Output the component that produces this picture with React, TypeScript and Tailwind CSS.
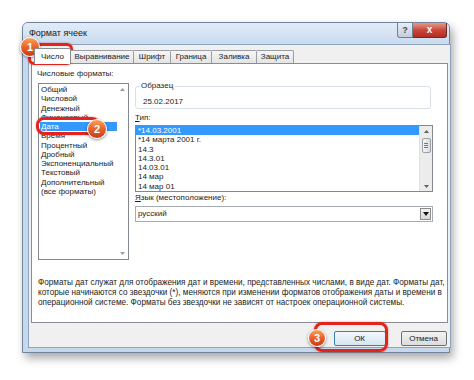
import React from "react";

const formats = [
  "Общий",
  "Числовой",
  "Денежный",
  "Финансовый",
  "Дата",
  "Время",
  "Процентный",
  "Дробный",
  "Экспоненциальный",
  "Текстовый",
  "Дополнительный",
  "(все форматы)",
];

const types = [
  "*14.03.2001",
  "*14 марта 2001 г.",
  "14.3",
  "14.3.01",
  "14.03.01",
  "14 мар",
  "14 мар 01",
];

const tabs = [
  { label: "Выравнивание", w: "w-[63px]" },
  { label: "Шрифт", w: "w-[37px]" },
  { label: "Граница", w: "w-[41px]" },
  { label: "Заливка", w: "w-[45px]" },
  { label: "Защита", w: "w-[37px]" },
];

function Badge({ n, className }: { n: string; className: string }) {
  return (
    <div
      className={
        "absolute rounded-full border-[1.5px] border-white bg-gradient-to-b from-[#f8a25a] via-[#e8622a] to-[#c93a16] shadow-[0_1px_3px_rgba(0,0,0,0.45)] flex items-center justify-center text-white font-bold text-[11px] leading-none " +
        className
      }
    >
      {n}
    </div>
  );
}

function Highlight({ className }: { className: string }) {
  return (
    <div
      className={
        "absolute border-[3px] border-[#e3231c] shadow-[0_0_2px_rgba(200,0,0,0.5)] " +
        className
      }
    />
  );
}

export default function App() {
  return (
    <div className="relative w-[474px] h-[380px] bg-white overflow-hidden font-['Liberation_Sans',Arial,sans-serif] text-[8px] text-[#1b1b1b]">
      <div className="pl-[22px] pt-[22px]">
        {/* Window */}
        <div className="w-[428px] h-[331px] flex flex-col border border-[#72849b] rounded-t-[6px] bg-[#c6d8ec] shadow-[3px_5px_10px_rgba(0,0,0,0.35)]">
          {/* Title bar */}
          <div className="h-[21px] flex items-start justify-between rounded-t-[5px] bg-gradient-to-b from-[#e2ecf7] to-[#c9dbef]">
            <div className="pl-[6px] pt-[5px] text-[9px] leading-[10px] text-[#1a1a1a]">Формат ячеек</div>
            <div className="flex pr-[2px]">
              <div className="w-[16px] h-[15px] border border-[#6f7f94] border-t-0 rounded-bl-[3px] bg-gradient-to-b from-[#e8eef6] to-[#c2cfdf] flex items-center justify-center text-[9px] font-bold text-[#3e4a5a] leading-none">
                ?
              </div>
              <div className="w-[34px] h-[15px] border border-[#6c2a2a] border-t-0 border-l-0 rounded-br-[3px] bg-gradient-to-b from-[#e39a8c] via-[#c9483a] to-[#b22d22] flex items-center justify-center text-white text-[10px] font-bold leading-none">
                x
              </div>
            </div>
          </div>
          {/* Frame + client */}
          <div className="flex-1 px-[5px] pb-[4px] flex">
            <div className="flex-1 border border-[#8ea3bd] bg-[#f0f0f0] flex flex-col px-[2px]">
              {/* Tabs */}
              <div className="mt-[2px] h-[16px] flex items-end pl-[3px] relative z-10">
                <div className="w-[37px] h-[16px] -mb-px bg-white border border-[#898c95] border-b-0 rounded-t-[2px] flex items-center justify-center leading-none">
                  Число
                </div>
                {tabs.map((t) => (
                  <div
                    key={t.label}
                    className={
                      t.w +
                      " h-[13px] bg-gradient-to-b from-[#f6f6f6] to-[#e4e4e4] border border-[#9a9da5] border-b-0 border-l-0 rounded-tr-[2px] flex items-center justify-center leading-none"
                    }
                  >
                    {t.label}
                  </div>
                ))}
              </div>
              {/* Panel */}
              <div className="h-[260px] bg-white border border-[#898c95] flex flex-col">
                <div className="flex">
                  {/* Left column */}
                  <div className="pl-[5px] pt-[5px] flex flex-col">
                    <div className="leading-[10px]">Числовые форматы:</div>
                    <div className="ml-px mt-[4px] w-[91px] h-[177px] border border-[#828790] flex">
                      <div className="flex-1 pt-[1px] pl-[1px]">
                        {formats.map((f) => (
                          <div
                            key={f}
                            className={
                              f === "Дата"
                                ? "h-[9.25px] leading-[9.25px] pl-[1px] bg-[#3399ff] text-white"
                                : "h-[9.25px] leading-[9.25px] pl-[1px]"
                            }
                          >
                            {f}
                          </div>
                        ))}
                      </div>
                      <div className="w-[11px] flex flex-col justify-between items-center py-[4px] text-[#9a9a9a]">
                        <svg width="5" height="3" viewBox="0 0 5 3"><path d="M0 3 L2.5 0 L5 3 Z" fill="#a0a0a0" /></svg>
                        <svg width="5" height="3" viewBox="0 0 5 3"><path d="M0 0 L2.5 3 L5 0 Z" fill="#a0a0a0" /></svg>
                      </div>
                    </div>
                  </div>
                  {/* Right column */}
                  <div className="ml-[6px] w-[298px] pt-[22px] flex flex-col">
                    <div className="relative w-[296px] h-[23px] border border-[#d8dfe6] rounded-[3px]">
                      <div className="absolute -top-[6px] left-[4px] bg-white px-[1px] leading-[10px]">Образец</div>
                      <div className="pl-[7px] pt-[10px] leading-[10px]">25.02.2017</div>
                    </div>
                    <div className="mt-[4px] leading-[10px]">
                      <span className="underline">Т</span>ип:
                    </div>
                    <div className="mt-[2px] h-[67px] border border-[#828790] flex">
                      <div className="flex-1 pt-[0px]">
                        {types.map((t, i) => (
                          <div
                            key={t}
                            className={
                              i === 0
                                ? "h-[9.3px] leading-[9.3px] pl-[2px] bg-[#3399ff] text-white"
                                : "h-[9.3px] leading-[9.3px] pl-[2px]"
                            }
                          >
                            {t}
                          </div>
                        ))}
                      </div>
                      <div className="w-[13px] bg-[#ececec] border-l border-[#e0e0e0] flex flex-col items-center">
                        <div className="h-[10px] flex items-center">
                          <svg width="5" height="3" viewBox="0 0 5 3"><path d="M0 3 L2.5 0 L5 3 Z" fill="#606060" /></svg>
                        </div>
                        <div className="mt-[2px] w-[9px] h-[15px] rounded-[2px] border border-[#9aa0a8] bg-gradient-to-r from-[#f4f4f4] to-[#dcdcdc] flex flex-col items-center justify-center gap-[1px]">
                          <div className="w-[4px] h-px bg-[#7a7a7a]" />
                          <div className="w-[4px] h-px bg-[#7a7a7a]" />
                          <div className="w-[4px] h-px bg-[#7a7a7a]" />
                        </div>
                        <div className="flex-1" />
                        <div className="h-[10px] flex items-center">
                          <svg width="5" height="3" viewBox="0 0 5 3"><path d="M0 0 L2.5 3 L5 0 Z" fill="#606060" /></svg>
                        </div>
                      </div>
                    </div>
                    <div className="leading-[10px] mt-[1px]">
                      <span className="underline">Я</span>зык (местоположение):
                    </div>
                    <div className="mt-[3px] h-[16px] border border-[#a5acb5] flex items-center">
                      <div className="flex-1 pl-[2px] leading-none">русский</div>
                      <div className="mr-px w-[11px] h-[12px] border border-[#8a8a8a] bg-gradient-to-b from-[#f2f2f2] to-[#d6d6d6] flex items-center justify-center">
                        <svg width="6" height="4" viewBox="0 0 6 4"><path d="M0 0 L3 4 L6 0 Z" fill="#111" /></svg>
                      </div>
                    </div>
                  </div>
                </div>
                <div className="pl-[6px] mt-[18px] pr-[2px] leading-[10px] text-[8.2px]">
                  <div className="whitespace-nowrap">Форматы дат служат для отображения дат и времени, представленных числами, в виде дат. Форматы дат,</div>
                  <div className="whitespace-nowrap">которые начинаются со звездочки (*), меняются при изменении форматов отображения даты и времени в</div>
                  <div className="whitespace-nowrap">операционной системе. Форматы без звездочки не зависят от настроек операционной системы.</div>
                </div>
              </div>
              {/* Buttons */}
              <div className="mt-[8px] flex justify-end pr-[1px] gap-[15px]">
                <div className="w-[52px] h-[15px] rounded-[2px] border border-[#3c7fb1] bg-gradient-to-b from-[#f2f7fb] to-[#d7e6f2] flex items-center justify-center leading-none">
                  ОК
                </div>
                <div className="w-[46px] h-[15px] rounded-[2px] border border-[#707070] bg-gradient-to-b from-[#f3f3f3] to-[#dcdcdc] flex items-center justify-center leading-none">
                  Отмена
                </div>
              </div>
            </div>
          </div>
        </div>
      </div>

      {/* Highlights and badges */}
      <Highlight className="left-[28px] top-[43px] w-[45px] h-[22px] rounded-[6px]" />
      <Highlight className="left-[36px] top-[117px] w-[64px] h-[18px] rounded-[8px]" />
      <Highlight className="left-[314px] top-[322px] w-[74px] h-[30px] rounded-[8px]" />
      <Badge n="1" className="left-[20px] top-[37px] w-[20px] h-[20px]" />
      <Badge n="2" className="left-[87px] top-[119px] w-[20px] h-[20px]" />
      <Badge n="3" className="left-[308px] top-[329px] w-[18px] h-[18px]" />
    </div>
  );
}
